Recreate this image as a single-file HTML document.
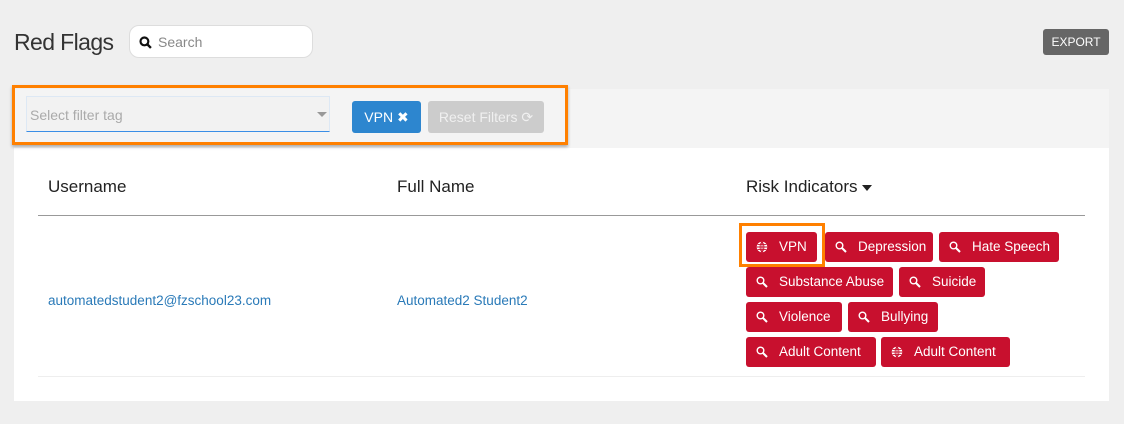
<!DOCTYPE html>
<html><head><style>
body{margin:0;width:1124px;height:424px;background:#efefef;font-family:"Liberation Sans",sans-serif;position:relative;overflow:hidden}
.a{position:absolute}
h1{position:absolute;left:14px;top:29px;margin:0;font-weight:normal;font-size:23px;letter-spacing:-0.6px;color:#333}
.search{left:129px;top:25px;width:184px;height:33px;background:#fff;border:1px solid #ddd;border-radius:10px;box-sizing:border-box}
.export{left:1043px;top:29px;width:66px;height:26px;background:#666;color:#fff;border-radius:3px;font-size:12px;text-align:center;line-height:26px}
.band{left:14px;top:89px;width:1095px;height:59px;background:#f4f4f4}
.panel{left:14px;top:148px;width:1095px;height:253px;background:#fff}
.orange{left:12px;top:85px;width:556px;height:60px;border:3px solid #ff8000;box-sizing:border-box;box-shadow:0 2px 3px rgba(0,0,0,.3)}
.sel{left:26px;top:96px;width:304px;height:36px;background:#f2f2f2;border:1px solid #dde8f4;border-bottom:1px solid #3a8ee6;box-sizing:border-box;color:#aaa;font-size:14px;line-height:36px;padding-left:3px}
.btn{height:32px;top:101px;border-radius:3px;color:#fff;font-size:14px;line-height:32px;text-align:center}
.hd{top:177px;font-size:17px;color:#222}
.ln{left:38px;width:1047px;height:1px}
.lk{top:293px;font-size:13.5px;color:#2a7ab8}
.t{position:absolute;height:30px;background:#c8102e;color:#fff;font-size:13.5px;line-height:30px;border-radius:3px;box-sizing:border-box;padding-left:33px}
.t svg{position:absolute;left:10px;top:9px}
</style></head><body>
<h1>Red Flags</h1>
<div class="a search"><svg class="a" style="left:9px;top:10px" width="13" height="13" viewBox="0 0 12 12"><circle cx="5" cy="5" r="3.6" stroke="#111" stroke-width="2" fill="none"/><path d="M7.5 7.5L11 11" stroke="#111" stroke-width="2.2"/></svg><span class="a" style="left:28px;top:8px;font-size:14px;color:#888">Search</span></div>
<div class="a export">EXPORT</div>
<div class="a band"></div>
<div class="a panel"></div>
<div class="a sel">Select filter tag<span class="a" style="right:2px;top:15px;width:0;height:0;border-left:5px solid transparent;border-right:5px solid transparent;border-top:5px solid #999"></span></div>
<div class="a btn" style="left:352px;width:69px;background:#2d86cf">VPN ✖</div>
<div class="a btn" style="left:428px;width:116px;background:#ccc;color:#f0f0f0">Reset Filters ⟳</div>
<div class="a orange"></div>
<div class="a hd" style="left:48px">Username</div>
<div class="a hd" style="left:397px">Full Name</div>
<div class="a hd" style="left:746px">Risk Indicators <span style="display:inline-block;border-left:5px solid transparent;border-right:5px solid transparent;border-top:6px solid #222;vertical-align:middle"></span></div>
<div class="a ln" style="top:215px;background:#999"></div>
<div class="a ln" style="top:376px;background:#eee"></div>
<div class="a lk" style="left:48px">automatedstudent2@fzschool23.com</div>
<div class="a lk" style="left:397px">Automated2 Student2</div>
<svg width="0" height="0" style="position:absolute"><defs>
<symbol id="m" viewBox="0 0 12 12"><circle cx="4.5" cy="4.5" r="3.3" stroke="#fff" stroke-width="1.4" fill="none"/><path d="M7 7L11 11" stroke="#fff" stroke-width="2"/></symbol>
<symbol id="g" viewBox="0 0 12 12"><circle cx="6" cy="6" r="5.3" fill="#fff"/><path d="M0.7 6H11.3M6 0.7V11.3M1.6 3.4H10.4M1.6 8.6H10.4M6 0.7C3.4 3.8 3.4 8.2 6 11.3M6 0.7C8.6 3.8 8.6 8.2 6 11.3" stroke="#c8102e" stroke-width=".9" fill="none"/></symbol></defs></svg>
<div class="t" style="left:746px;top:232px;width:71px"><svg width="12" height="12"><use href="#g"/></svg>VPN</div>
<div class="a" style="left:739px;top:223px;width:86px;height:44px;border:3px solid #ff8000;box-sizing:border-box"></div>
<div class="t" style="left:825px;top:232px;width:108px"><svg width="12" height="12"><use href="#m"/></svg>Depression</div>
<div class="t" style="left:939px;top:232px;width:120px"><svg width="12" height="12"><use href="#m"/></svg>Hate Speech</div>
<div class="t" style="left:746px;top:267px;width:147px"><svg width="12" height="12"><use href="#m"/></svg>Substance Abuse</div>
<div class="t" style="left:899px;top:267px;width:86px"><svg width="12" height="12"><use href="#m"/></svg>Suicide</div>
<div class="t" style="left:746px;top:302px;width:96px"><svg width="12" height="12"><use href="#m"/></svg>Violence</div>
<div class="t" style="left:848px;top:302px;width:90px"><svg width="12" height="12"><use href="#m"/></svg>Bullying</div>
<div class="t" style="left:746px;top:337px;width:130px"><svg width="12" height="12"><use href="#m"/></svg>Adult Content</div>
<div class="t" style="left:881px;top:337px;width:129px"><svg width="12" height="12"><use href="#g"/></svg>Adult Content</div>
</body></html>
